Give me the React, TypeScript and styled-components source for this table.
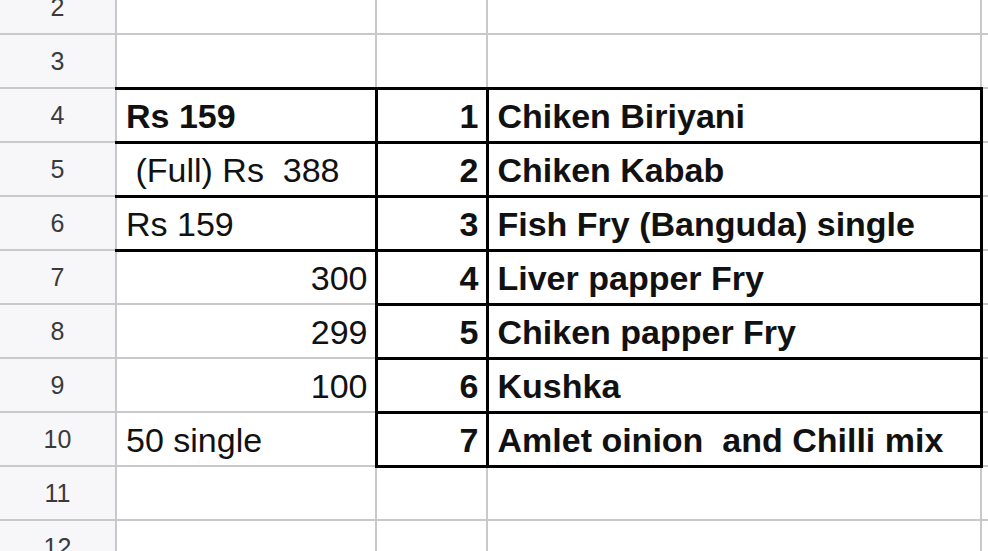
import React from 'react'
import styled, { createGlobalStyle, css } from 'styled-components'

const GlobalStyle = createGlobalStyle`
  html, body {
    margin: 0;
    padding: 0;
    background: #ffffff;
    overflow: hidden;
  }
  body {
    font-family: 'Liberation Sans', Arial, Helvetica, sans-serif;
  }
`

const GRID = '#c9c9cc'
const INK = '#000000'

type Frame = 'none' | 'hz' | 'all'

const Viewport = styled.div`
  width: 988px;
  height: 551px;
  overflow: hidden;
`

// sheet is scrolled so that row 2 is mostly hidden above the top edge
const Sheet = styled.table`
  margin-top: -21px;
  border-collapse: collapse;
  table-layout: fixed;
  width: 1090px;
`

const Row = styled.tr`
  height: 54px;
`

const RowHead = styled.th`
  width: 116px;
  padding: 0;
  background: #f7f7fa;
  border: 2px solid ${GRID};
  border-left: none;
  color: #3a3a3c;
  font-size: 25px;
  font-weight: 400;
  text-align: center;
  vertical-align: middle;
`

const Cell = styled.td<{ $align?: 'left' | 'right'; $bold?: boolean; $frame?: Frame }>`
  padding: 0 7px 5px 9px;
  border: 2px solid ${GRID};
  color: #111111;
  font-size: 34px;
  font-weight: ${({ $bold }) => ($bold ? 700 : 400)};
  text-align: ${({ $align }) => $align ?? 'left'};
  vertical-align: bottom;
  white-space: pre;
  overflow: hidden;
  line-height: 40px;
  ${({ $frame }) =>
    $frame === 'all' &&
    css`
      border: 3px solid ${INK};
    `}
  ${({ $frame }) =>
    $frame === 'hz' &&
    css`
      border-top: 3px solid ${INK};
      border-bottom: 3px solid ${INK};
    `}
`

const ColHead = styled.col`
  width: 116px;
`
const ColB = styled.col`
  width: 260px;
`
const ColC = styled.col`
  width: 111px;
`
const ColD = styled.col`
  width: 494px;
`

interface SheetRow {
  n: number
  price?: string
  priceAlign?: 'left' | 'right'
  priceBold?: boolean
  priceFrame?: Frame
  no?: string
  dish?: string
  boxed?: boolean
}

const rows: SheetRow[] = [
  { n: 2 },
  { n: 3 },
  { n: 4, price: 'Rs 159', priceBold: true, priceFrame: 'hz', no: '1', dish: 'Chiken Biriyani', boxed: true },
  { n: 5, price: ' (Full) Rs  388', priceFrame: 'hz', no: '2', dish: 'Chiken Kabab', boxed: true },
  { n: 6, price: 'Rs 159', priceFrame: 'hz', no: '3', dish: 'Fish Fry (Banguda) single', boxed: true },
  { n: 7, price: '300', priceAlign: 'right', no: '4', dish: 'Liver papper Fry', boxed: true },
  { n: 8, price: '299', priceAlign: 'right', no: '5', dish: 'Chiken papper Fry', boxed: true },
  { n: 9, price: '100', priceAlign: 'right', no: '6', dish: 'Kushka', boxed: true },
  { n: 10, price: '50 single', no: '7', dish: 'Amlet oinion  and Chilli mix', boxed: true },
  { n: 11 },
  { n: 12 },
]

export default function App() {
  return (
    <Viewport>
      <GlobalStyle />
      <Sheet>
        <colgroup>
          <ColHead />
          <ColB />
          <ColC />
          <ColD />
          <col />
        </colgroup>
        <tbody>
          {rows.map(r => (
            <Row key={r.n}>
              <RowHead>{r.n}</RowHead>
              <Cell $align={r.priceAlign} $bold={r.priceBold} $frame={r.priceFrame ?? 'none'}>
                {r.price ?? ''}
              </Cell>
              <Cell $align="right" $bold $frame={r.boxed ? 'all' : 'none'}>
                {r.no ?? ''}
              </Cell>
              <Cell $bold $frame={r.boxed ? 'all' : 'none'}>
                {r.dish ?? ''}
              </Cell>
              <Cell />
            </Row>
          ))}
        </tbody>
      </Sheet>
    </Viewport>
  )
}
